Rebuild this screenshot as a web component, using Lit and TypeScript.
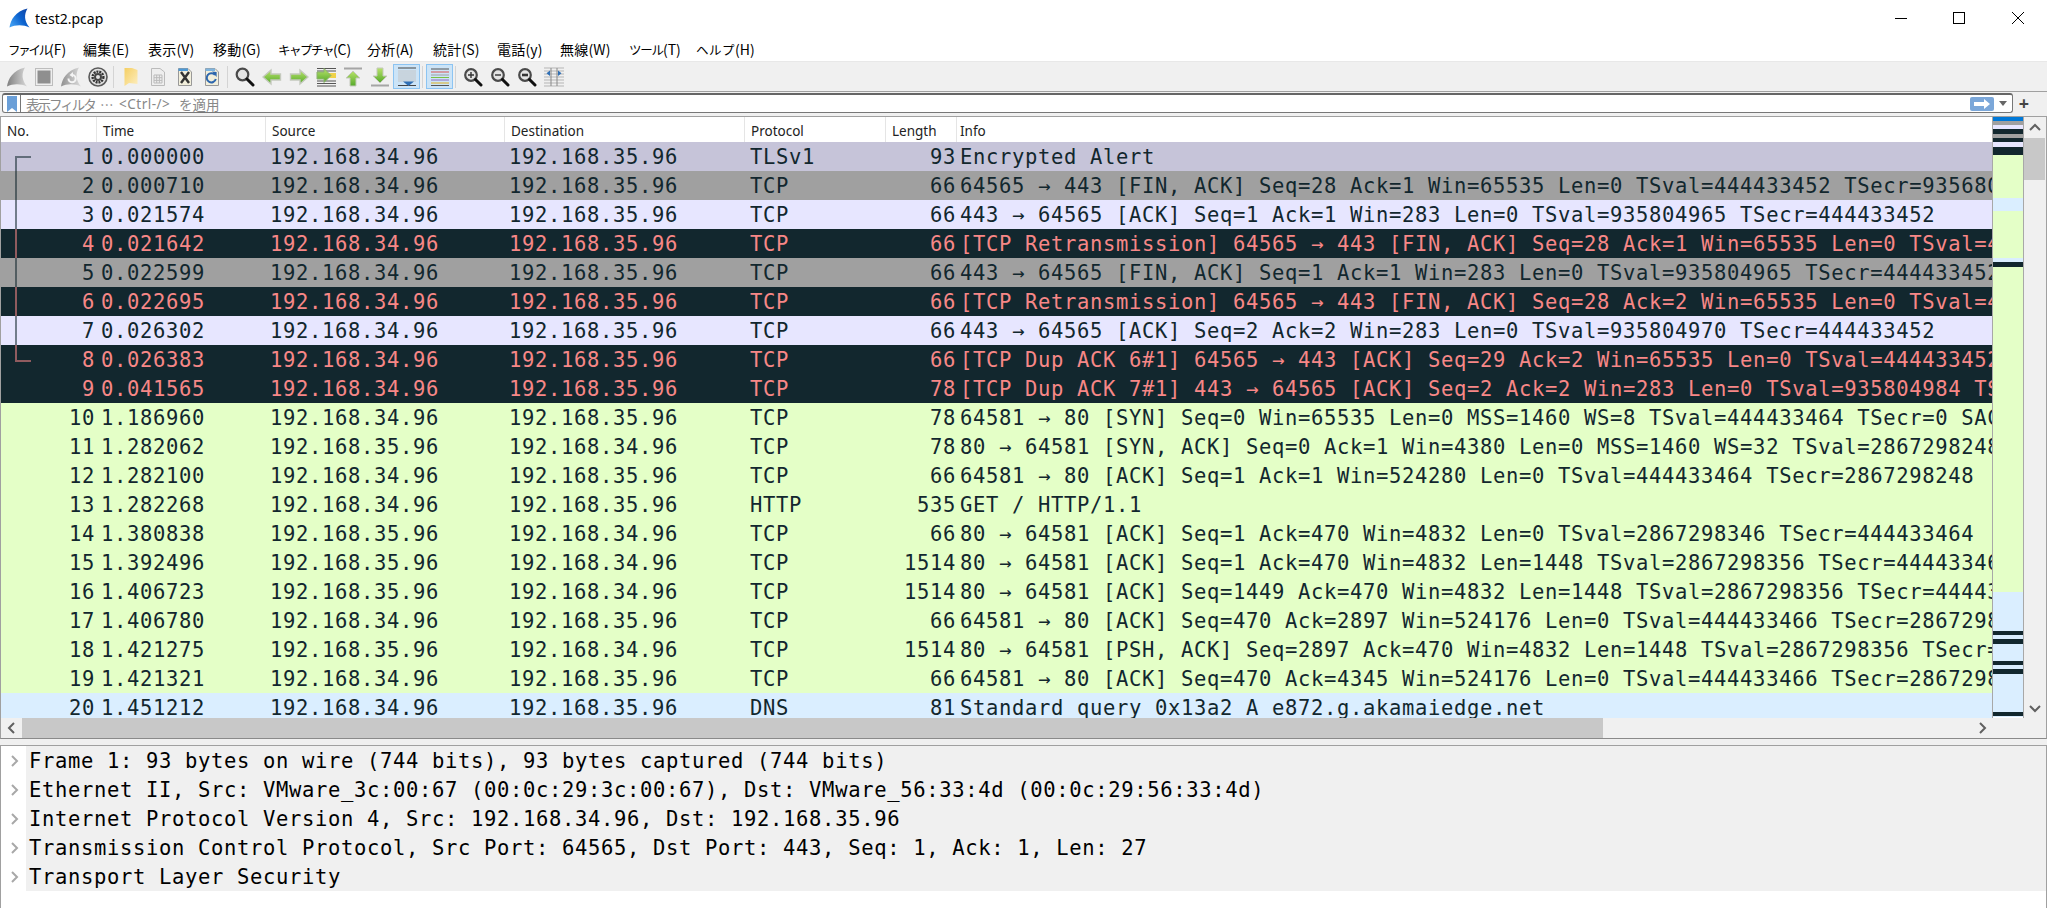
import { LitElement, html, css, svg } from 'lit';
import { customElement } from 'lit/decorators.js';

type Kind = 'sel' | 'gray' | 'tcp' | 'bad' | 'http' | 'udp';

const rows: [number, string, string, string, string, number, string, Kind][] = [
  [1, '0.000000', '192.168.34.96', '192.168.35.96', 'TLSv1', 93, 'Encrypted Alert', 'sel'],
  [2, '0.000710', '192.168.34.96', '192.168.35.96', 'TCP', 66, '64565 → 443 [FIN, ACK] Seq=28 Ack=1 Win=65535 Len=0 TSval=444433452 TSecr=935680', 'gray'],
  [3, '0.021574', '192.168.34.96', '192.168.35.96', 'TCP', 66, '443 → 64565 [ACK] Seq=1 Ack=1 Win=283 Len=0 TSval=935804965 TSecr=444433452', 'tcp'],
  [4, '0.021642', '192.168.34.96', '192.168.35.96', 'TCP', 66, '[TCP Retransmission] 64565 → 443 [FIN, ACK] Seq=28 Ack=1 Win=65535 Len=0 TSval=444433452', 'bad'],
  [5, '0.022599', '192.168.34.96', '192.168.35.96', 'TCP', 66, '443 → 64565 [FIN, ACK] Seq=1 Ack=1 Win=283 Len=0 TSval=935804965 TSecr=444433452', 'gray'],
  [6, '0.022695', '192.168.34.96', '192.168.35.96', 'TCP', 66, '[TCP Retransmission] 64565 → 443 [FIN, ACK] Seq=28 Ack=2 Win=65535 Len=0 TSval=444433452', 'bad'],
  [7, '0.026302', '192.168.34.96', '192.168.35.96', 'TCP', 66, '443 → 64565 [ACK] Seq=2 Ack=2 Win=283 Len=0 TSval=935804970 TSecr=444433452', 'tcp'],
  [8, '0.026383', '192.168.34.96', '192.168.35.96', 'TCP', 66, '[TCP Dup ACK 6#1] 64565 → 443 [ACK] Seq=29 Ack=2 Win=65535 Len=0 TSval=444433452 TSecr=935804970', 'bad'],
  [9, '0.041565', '192.168.34.96', '192.168.35.96', 'TCP', 78, '[TCP Dup ACK 7#1] 443 → 64565 [ACK] Seq=2 Ack=2 Win=283 Len=0 TSval=935804984 TSecr=444433452', 'bad'],
  [10, '1.186960', '192.168.34.96', '192.168.35.96', 'TCP', 78, '64581 → 80 [SYN] Seq=0 Win=65535 Len=0 MSS=1460 WS=8 TSval=444433464 TSecr=0 SACK_PERM=1', 'http'],
  [11, '1.282062', '192.168.35.96', '192.168.34.96', 'TCP', 78, '80 → 64581 [SYN, ACK] Seq=0 Ack=1 Win=4380 Len=0 MSS=1460 WS=32 TSval=2867298248 TSecr=444433464', 'http'],
  [12, '1.282100', '192.168.34.96', '192.168.35.96', 'TCP', 66, '64581 → 80 [ACK] Seq=1 Ack=1 Win=524280 Len=0 TSval=444433464 TSecr=2867298248', 'http'],
  [13, '1.282268', '192.168.34.96', '192.168.35.96', 'HTTP', 535, 'GET / HTTP/1.1', 'http'],
  [14, '1.380838', '192.168.35.96', '192.168.34.96', 'TCP', 66, '80 → 64581 [ACK] Seq=1 Ack=470 Win=4832 Len=0 TSval=2867298346 TSecr=444433464', 'http'],
  [15, '1.392496', '192.168.35.96', '192.168.34.96', 'TCP', 1514, '80 → 64581 [ACK] Seq=1 Ack=470 Win=4832 Len=1448 TSval=2867298356 TSecr=444433464', 'http'],
  [16, '1.406723', '192.168.35.96', '192.168.34.96', 'TCP', 1514, '80 → 64581 [ACK] Seq=1449 Ack=470 Win=4832 Len=1448 TSval=2867298356 TSecr=444433464', 'http'],
  [17, '1.406780', '192.168.34.96', '192.168.35.96', 'TCP', 66, '64581 → 80 [ACK] Seq=470 Ack=2897 Win=524176 Len=0 TSval=444433466 TSecr=2867298356', 'http'],
  [18, '1.421275', '192.168.35.96', '192.168.34.96', 'TCP', 1514, '80 → 64581 [PSH, ACK] Seq=2897 Ack=470 Win=4832 Len=1448 TSval=2867298356 TSecr=444433466', 'http'],
  [19, '1.421321', '192.168.34.96', '192.168.35.96', 'TCP', 66, '64581 → 80 [ACK] Seq=470 Ack=4345 Win=524176 Len=0 TSval=444433466 TSecr=2867298356', 'http'],
  [20, '1.451212', '192.168.34.96', '192.168.35.96', 'DNS', 81, 'Standard query 0x13a2 A e872.g.akamaiedge.net', 'udp'],
];

const details = [
  'Frame 1: 93 bytes on wire (744 bits), 93 bytes captured (744 bits)',
  'Ethernet II, Src: VMware_3c:00:67 (00:0c:29:3c:00:67), Dst: VMware_56:33:4d (00:0c:29:56:33:4d)',
  'Internet Protocol Version 4, Src: 192.168.34.96, Dst: 192.168.35.96',
  'Transmission Control Protocol, Src Port: 64565, Dst Port: 443, Seq: 1, Ack: 1, Len: 27',
  'Transport Layer Security',
];

// label, key, slot width, letter spacing of the label, label font size (the original UI font has narrow kana)
const menus: [string, string, number, number, number][] = [
  ['ファイル', '(F)', 75, -2.25, 12.5], ['編集', '(E)', 65, 0.3, 14], ['表示', '(V)', 65, 0.3, 14], ['移動', '(G)', 65, 0.3, 14], ['キャプチャ', '(C)', 89, -1.5, 12.5],
  ['分析', '(A)', 66, 0.3, 14], ['統計', '(S)', 64, 0.3, 14], ['電話', '(y)', 63, 0.3, 14], ['無線', '(W)', 69, 0.3, 14], ['ツール', '(T)', 67, -1.2, 12.5], ['ヘルプ', '(H)', 70, 0.5, 12.5],
];

const headers = ['No.', 'Time', 'Source', 'Destination', 'Protocol', 'Length', 'Info'];

// color, height in px, top to bottom
const mapStripes: [string, number][] = [
  ['#0078d7', 4], ['#a0a0a0', 4], ['#e7e6ff', 4], ['#12272e', 5], ['#a0a0a0', 4], ['#12272e', 4],
  ['#e7e6ff', 5], ['#12272e', 8], ['#e4ffc7', 43], ['#daeeff', 13], ['#e4ffc7', 47], ['#daeeff', 4],
  ['#12272e', 5], ['#e4ffc7', 325], ['#daeeff', 39], ['#12272e', 4], ['#daeeff', 4], ['#12272e', 5],
  ['#daeeff', 17], ['#12272e', 4], ['#daeeff', 4], ['#12272e', 5], ['#daeeff', 38], ['#12272e', 4], ['#daeeff', 1],
];

const finPath = 'M0 19.5C1 12 6 3 18 .5C14.5 6 14.5 13 20 19.5C14 16.5 6 16.5 0 19.5Z';
const lens = (cx = 8, cy = 8) => svg`
  <circle cx=${cx} cy=${cy} r="5.8" fill="#e4e4e4" stroke="#4a4a4a" stroke-width="2.2"/>
  <path d="M${cx + 4.5} ${cy + 4.5}L18 18" stroke="#111" stroke-width="3" stroke-linecap="round"/>`;
const doc = svg`<path d="M3.5 1.5H13L16.5 5V18.5H3.5Z" fill="#f2efdc" stroke="#999"/>`;
const stackLines = (ys: number[], x1 = 1, x2 = 19, color = '#777') =>
  ys.map((y) => svg`<path d="M${x1} ${y}H${x2}" stroke=${color} stroke-width="1"/>`);

const icons: Record<string, unknown> = {
  fin: svg`<path d=${finPath} fill="url(#gfin)"/>`,
  stop: svg`<rect x="1.5" y="1.5" width="17" height="17" fill="#eee" stroke="#bdbdbd"/><rect x="3.5" y="3.5" width="13" height="13" fill="#8f8f8f"/>`,
  restart: svg`<path d=${finPath} fill="url(#gfin)" opacity=".85"/><path d="M7.5 11.5a3.6 3.6 0 1 0 4-3.4" fill="none" stroke="#f4f4f4" stroke-width="2"/><path d="M12 5V10.5L8.5 8Z" fill="#f4f4f4"/>`,
  gear: svg`<circle cx="10" cy="10" r="9" fill="#e2e2e2" stroke="#5a5a5a" stroke-width="1.6"/><circle cx="10" cy="10" r="5.4" fill="none" stroke="#333" stroke-width="2.4" stroke-dasharray="2 .9"/><circle cx="10" cy="10" r="4" fill="#444"/><circle cx="10" cy="10" r="2" fill="#e2e2e2"/>`,
  folder: svg`<path d="M3.5 1H11L16.5 3V17L8 16L3.5 19Z" fill="url(#gfold)"/>`,
  blank: svg`<path d="M3.5 1.5H12L16.5 5V18.5H3.5Z" fill="#eee" stroke="#bbb"/><path d="M6 8H14V16H6ZM6 10.7H14M6 13.4H14M8.7 8V16M11.4 8V16" fill="none" stroke="#bbb"/>`,
  close: svg`${doc}<path d="M3.5 1.5H13V4H3.5Z" fill="#4f9ad6"/><path d="M6 5L14 16M14 5L6 16" stroke="#333" stroke-width="2.4"/>`,
  reload: svg`${doc}<path d="M3.5 1.5H13V4H3.5Z" fill="#7fb4de"/><path d="M13 8a4.6 4.6 0 1 0 .8 4" fill="none" stroke="#2d66ad" stroke-width="2"/><path d="M10 4.6L14.6 5V10Z" fill="#2d66ad"/>`,
  search: lens(7.5, 7.5),
  left: svg`<path d="M9 3V7H18.5V13H9V17L1 10Z" fill="url(#ggreen)" stroke="#c4c9bd" stroke-width="1.4"/>`,
  right: svg`<path d="M11 3V7H1.5V13H11V17L19 10Z" fill="url(#ggreen)" stroke="#c4c9bd" stroke-width="1.4"/>`,
  goto: svg`${stackLines([1.5, 4, 14, 16.5, 19], 1, 20, '#555')}<rect x="12" y="6" width="8" height="5" fill="#efd24a"/><path d="M8 1.5V5H1V12H8V15.5L15 8.5Z" fill="url(#ggreen)" stroke="#8bb070"/>`,
  top: svg`<path d="M1 1.5H19" stroke="#a5a5a5" stroke-width="2"/><path d="M10 4L17 11H13V19H7V11H3Z" fill="url(#ggreen)" stroke="#c4c9bd"/>`,
  bottom: svg`<path d="M1 18.5H19" stroke="#a5a5a5" stroke-width="2"/><path d="M10 16L17 9H13V1H7V9H3Z" fill="url(#ggreen)" stroke="#c4c9bd"/>`,
  auto: svg`${stackLines([4, 6, 8, 10, 12, 14], 1, 19, '#c4c4c4')}<path d="M1 1H19M1 18.5H19" stroke="#444" stroke-width="1.2"/><path d="M6 14.5H17L11.5 19Z" fill="#2f6fb5"/>`,
  color: svg`<path d="M1 2H19" stroke="#555"/><path d="M1 5H19" stroke="#d9534f"/><path d="M1 8H19" stroke="#a0a0a0"/><path d="M1 10.5H19" stroke="#7bc043"/><path d="M1 13H19" stroke="#8e6bbf"/><path d="M1 16H19" stroke="#e0b020"/><path d="M1 18.5H19" stroke="#555"/>`,
  zin: svg`${lens()}<path d="M5 8H11M8 5V11" stroke="#333" stroke-width="1.4"/>`,
  zout: svg`${lens()}<path d="M5 8H11" stroke="#333" stroke-width="1.4"/>`,
  znorm: svg`${lens()}<path d="M5 8H11" stroke="#333" stroke-width="2.6"/>`,
  resize: svg`${stackLines([1, 4, 7, 10, 13, 16, 19], 0, 20, '#b5b5b5')}<path d="M7 1V19M13 1V19" stroke="#888"/><path d="M6 3.5V9L2.5 6.2ZM14 3.5V9L17.5 6.2Z" fill="#2f6fb5"/>`,
};

const toolbar = ['fin', 'stop', 'restart', 'gear', '|', 'folder', 'blank', 'close', 'reload', '|', 'search', 'left', 'right', 'goto', 'top', 'bottom', 'auto*', '|', 'color*', '|', 'zin', 'zout', 'znorm', 'resize'];

@customElement('app-root')
export class AppRoot extends LitElement {
  static styles = css`
    :host {
      display: flex;
      flex-direction: column;
      width: 100vw;
      height: 100vh;
      overflow: hidden;
      background: #fff;
      color: #000;
      font-family: 'Noto Sans', 'Noto Sans CJK JP', sans-serif;
    }
    .title {
      height: 36px;
      display: flex;
      align-items: center;
      padding-left: 9px;
      font-size: 14px;
      flex: none;
    }
    .title .name { margin-left: 5px; flex: 1; }
    .winbtn { width: 58.5px; height: 36px; display: flex; align-items: center; justify-content: center; }
    .menu {
      height: 25px;
      flex: none;
      display: flex;
      align-items: center;
      padding-left: 8px;
      font-family: 'Noto Sans CJK JP', 'Noto Sans', sans-serif;
      font-size: 14px;
      white-space: nowrap;
    }
    .menu > span { flex: none; }
    .toolbar {
      height: 31px;
      flex: none;
      box-sizing: border-box;
      display: flex;
      align-items: center;
      padding-left: 3px;
      background: #f0f0f0;
      border-top: 1px solid #e8e8e8;
      border-bottom: 1px solid #a0a0a0;
    }
    .tool { width: 27px; height: 25px; box-sizing: border-box; display: flex; align-items: center; justify-content: center; flex: none; }
    .tool.on { background: #cce4f7; border: 1px solid #8cc4f2; }
    .tsep { width: 6px; height: 22px; flex: none; position: relative; }
    .tsep::after { content: ''; position: absolute; left: 2px; top: 0; bottom: 0; width: 1px; background: #d4d4d4; }
    .filterbar {
      height: 25px;
      flex: none;
      box-sizing: border-box;
      display: flex;
      align-items: center;
      background: #f0f0f0;
      padding: 0 0 2px 2px;
      border-bottom: 1px solid #a0a0a0;
    }
    .filter {
      width: 2011px;
      height: 20px;
      box-sizing: border-box;
      background: #fff;
      border: 1px solid #777;
      border-top: 2px solid #666;
      border-radius: 3px;
      display: flex;
      align-items: center;
    }
    .bm { width: 17px; height: 100%; display: flex; align-items: center; justify-content: center; border-right: 1px solid #777; flex: none; }
    .ph {
      flex: 1;
      display: flex;
      align-items: center;
      padding-left: 5px;
      font-family: 'Noto Sans CJK JP', 'Noto Sans', sans-serif;
      font-size: 13.5px;
      color: #888;
      white-space: pre;
    }
    .ph .kana { letter-spacing: -2px; width: 74px; }
    .ph .dots { width: 19px; }
    .ph .key { font-family: 'Noto Sans', sans-serif; width: 60px; letter-spacing: .5px; }
    .apply { width: 24px; height: 14px; background: #7ba7d9; border-radius: 2px; display: flex; align-items: center; justify-content: center; flex: none; }
    .drop { width: 18px; height: 14px; display: flex; align-items: center; justify-content: center; flex: none; }
    .plus { width: 20px; text-align: center; font-size: 18px; font-weight: 700; color: #444; line-height: 20px; flex: none; margin-left: 1px; }
    .pane { flex: none; height: 601px; display: flex; border-left: 1px solid #a0a0a0; border-right: 1px solid #a0a0a0; }
    .table { flex: 1; min-width: 0; overflow: hidden; }
    .head {
      height: 25px;
      display: grid;
      grid-template-columns: 96px 169px 239px 240px 141px 71px 1fr;
      font-family: 'Noto Sans', 'Noto Sans CJK JP', sans-serif;
      font-size: 13.5px;
      color: #222;
      background: #fff;
    }
    .head div { padding-left: 6px; line-height: 28px; border-right: 1px solid #e5e5e5; }
    .head div:last-child { border-right: 0; padding-left: 3px; }
    .row {
      height: 29px;
      box-sizing: border-box;
      padding-top: 2px;
      display: grid;
      grid-template-columns: 100px 169px 239px 241px 130px 76px 1fr;
      position: relative;
      font-family: 'DejaVu Sans Mono', 'Liberation Mono', monospace;
      font-size: 20.5px;
      letter-spacing: 0.66px;
      line-height: 27px;
      white-space: nowrap;
    }
    .row > div { overflow: hidden; }
    .num { text-align: right; }
    .no { padding-right: 6px; }
    .info { padding-left: 4px; }
    .sel { background: #c6c4d9; color: #12272e; }
    .gray { background: #a0a0a0; color: #12272e; }
    .tcp { background: #e7e6ff; color: #12272e; }
    .bad { background: #12272e; color: #f78787; }
    .http { background: #e4ffc7; color: #12272e; }
    .udp { background: #daeeff; color: #12272e; }
    .rel { position: absolute; left: 14px; width: 14px; border-left: 2px solid currentColor; opacity: 0.55; }
    .rel.first { top: 14px; bottom: 0; border-top: 2px solid currentColor; }
    .rel.mid { top: 0; bottom: 0; }
    .rel.last { top: 0; height: 15px; border-bottom: 2px solid currentColor; }
    .map { width: 30px; flex: none; border-left: 1px solid #a8a8a8; border-right: 1px solid #a8a8a8; overflow: hidden; }
    .map div { width: 100%; }
    .vbar { width: 22px; flex: none; background: #f0f0f0; display: flex; flex-direction: column; align-items: center; box-sizing: border-box; padding: 0 1px 0 0; }
    .vbtn { height: 21px; display: flex; align-items: center; justify-content: center; flex: none; }
    .vthumb { width: 100%; height: 42px; background: #c8c8c8; flex: none; }
    .vgap { flex: 1; }
    .hbar { flex: none; height: 20px; display: flex; background: #f0f0f0; border-left: 1px solid #a0a0a0; border-right: 1px solid #a0a0a0; border-bottom: 1px solid #8a8a8a; box-sizing: content-box; }
    .hbtn { width: 21px; display: flex; align-items: center; justify-content: center; flex: none; }
    .hthumb { width: 1581px; height: 100%; background: #c8c8c8; flex: none; }
    .hgap { flex: 1; display: flex; justify-content: flex-end; padding-right: 58px; align-items: center; }
    .sash { flex: none; height: 6px; background: #f0f0f0; }
    .details { flex: 1; border-top: 1px solid #a0a0a0; border-left: 1px solid #a0a0a0; border-right: 1px solid #a0a0a0; }
    .drow {
      height: 29px;
      display: flex;
      align-items: center;
      font-family: 'DejaVu Sans Mono', 'Liberation Mono', monospace;
      font-size: 20.5px;
      letter-spacing: 0.66px;
      white-space: nowrap;
    }
    .dchev { width: 25px; display: flex; justify-content: center; flex: none; }
    .dtext { flex: 1; box-sizing: border-box; height: 29px; background: #f0f0f0; padding: 2px 0 0 3px; line-height: 27px; }
  `;

  private icon(name: string) {
    return html`<svg width="20" height="20" viewBox="0 0 20 20">
      <defs>
        <linearGradient id="gfin" x1="1" y1="0" x2="0" y2="0"><stop offset="0" stop-color="#d8d8d8"/><stop offset="1" stop-color="#808080"/></linearGradient>
        <linearGradient id="gfold" x1="0" y1="0" x2="1" y2="1"><stop offset="0" stop-color="#f5cf63"/><stop offset="1" stop-color="#fdeec0"/></linearGradient>
        <linearGradient id="ggreen" x1="0" y1="0" x2="0" y2="1"><stop offset="0" stop-color="#b9e36b"/><stop offset="1" stop-color="#55a92a"/></linearGradient>
      </defs>
      ${icons[name]}
    </svg>`;
  }

  private chev(dir: 'up' | 'down' | 'left' | 'right', color = '#606060') {
    const d = { up: 'M1 8L6 3L11 8', down: 'M1 4L6 9L11 4', left: 'M8 1L3 6L8 11', right: 'M4 1L9 6L4 11' }[dir];
    return html`<svg width="12" height="12" viewBox="0 0 12 12"><path d=${d} fill="none" stroke=${color} stroke-width="2"/></svg>`;
  }

  private relLine(no: number) {
    if (no > 8) return null;
    const cls = no === 1 ? 'first' : no === 8 ? 'last' : 'mid';
    return html`<span class="rel ${cls}"></span>`;
  }

  render() {
    return html`
      <div class="title">
        <svg width="21" height="20" viewBox="0 0 20 20">
          <defs><linearGradient id="tfin" x1="1" y1="0" x2="0" y2="0.7"><stop offset="0" stop-color="#123f9e"/><stop offset=".55" stop-color="#0c63cf"/><stop offset="1" stop-color="#3e9bf0"/></linearGradient></defs>
          <path d=${finPath} fill="url(#tfin)"/>
        </svg>
        <span class="name">test2.pcap</span>
        <div class="winbtn"><svg width="12" height="12"><path d="M0 6.5H12" stroke="#000"/></svg></div>
        <div class="winbtn"><svg width="12" height="12"><rect x=".5" y=".5" width="11" height="11" fill="none" stroke="#000"/></svg></div>
        <div class="winbtn"><svg width="12" height="12"><path d="M0 0L12 12M12 0L0 12" stroke="#000"/></svg></div>
      </div>
      <div class="menu">
        ${menus.map(
          ([label, key, w, ls, fs]) =>
            html`<span style="width:${w}px"><span style="letter-spacing:${ls}px;font-size:${fs}px">${label}</span>${key}</span>`
        )}
      </div>
      <div class="toolbar">
        ${toolbar.map((t) =>
          t === '|'
            ? html`<div class="tsep"></div>`
            : html`<div class="tool ${t.endsWith('*') ? 'on' : ''}">${this.icon(t.replace('*', ''))}</div>`
        )}
      </div>
      <div class="filterbar">
        <div class="filter">
          <div class="bm"><svg width="12" height="16" viewBox="0 0 12 16"><path d="M1 0H11V16L6 12L1 16Z" fill="#6a9fd8"/></svg></div>
          <div class="ph"><span class="kana">表示フィルタ</span><span class="dots">⋯</span><span class="key">&lt;Ctrl-/&gt;</span><span>を適用</span></div>
          <div class="apply"><svg width="18" height="10" viewBox="0 0 18 10"><path d="M1 3H11V0L17 5L11 10V7H1Z" fill="#fff"/></svg></div>
          <div class="drop"><svg width="8" height="5"><path d="M0 0H8L4 5Z" fill="#666"/></svg></div>
        </div>
        <div class="plus">+</div>
      </div>
      <div class="pane">
        <div class="table">
          <div class="head">${headers.map((h) => html`<div>${h}</div>`)}</div>
          ${rows.map(
            ([no, time, src, dst, proto, len, info, kind]) => html`
              <div class="row ${kind}">
                ${this.relLine(no)}
                <div class="num no">${no}</div>
                <div>${time}</div>
                <div>${src}</div>
                <div>${dst}</div>
                <div>${proto}</div>
                <div class="num">${len}</div>
                <div class="info">${info}</div>
              </div>
            `
          )}
        </div>
        <div class="map">${mapStripes.map(([c, h]) => html`<div style="height:${h}px;background:${c}"></div>`)}</div>
        <div class="vbar">
          <div class="vbtn">${this.chev('up')}</div>
          <div class="vthumb"></div>
          <div class="vgap"></div>
          <div class="vbtn">${this.chev('down')}</div>
        </div>
      </div>
      <div class="hbar">
        <div class="hbtn">${this.chev('left')}</div>
        <div class="hthumb"></div>
        <div class="hgap">${this.chev('right')}</div>
      </div>
      <div class="sash"></div>
      <div class="details">
        ${details.map(
          (d) => html`<div class="drow"><div class="dchev">${this.chev('right', '#a8a8a8')}</div><div class="dtext">${d}</div></div>`
        )}
      </div>
    `;
  }
}
